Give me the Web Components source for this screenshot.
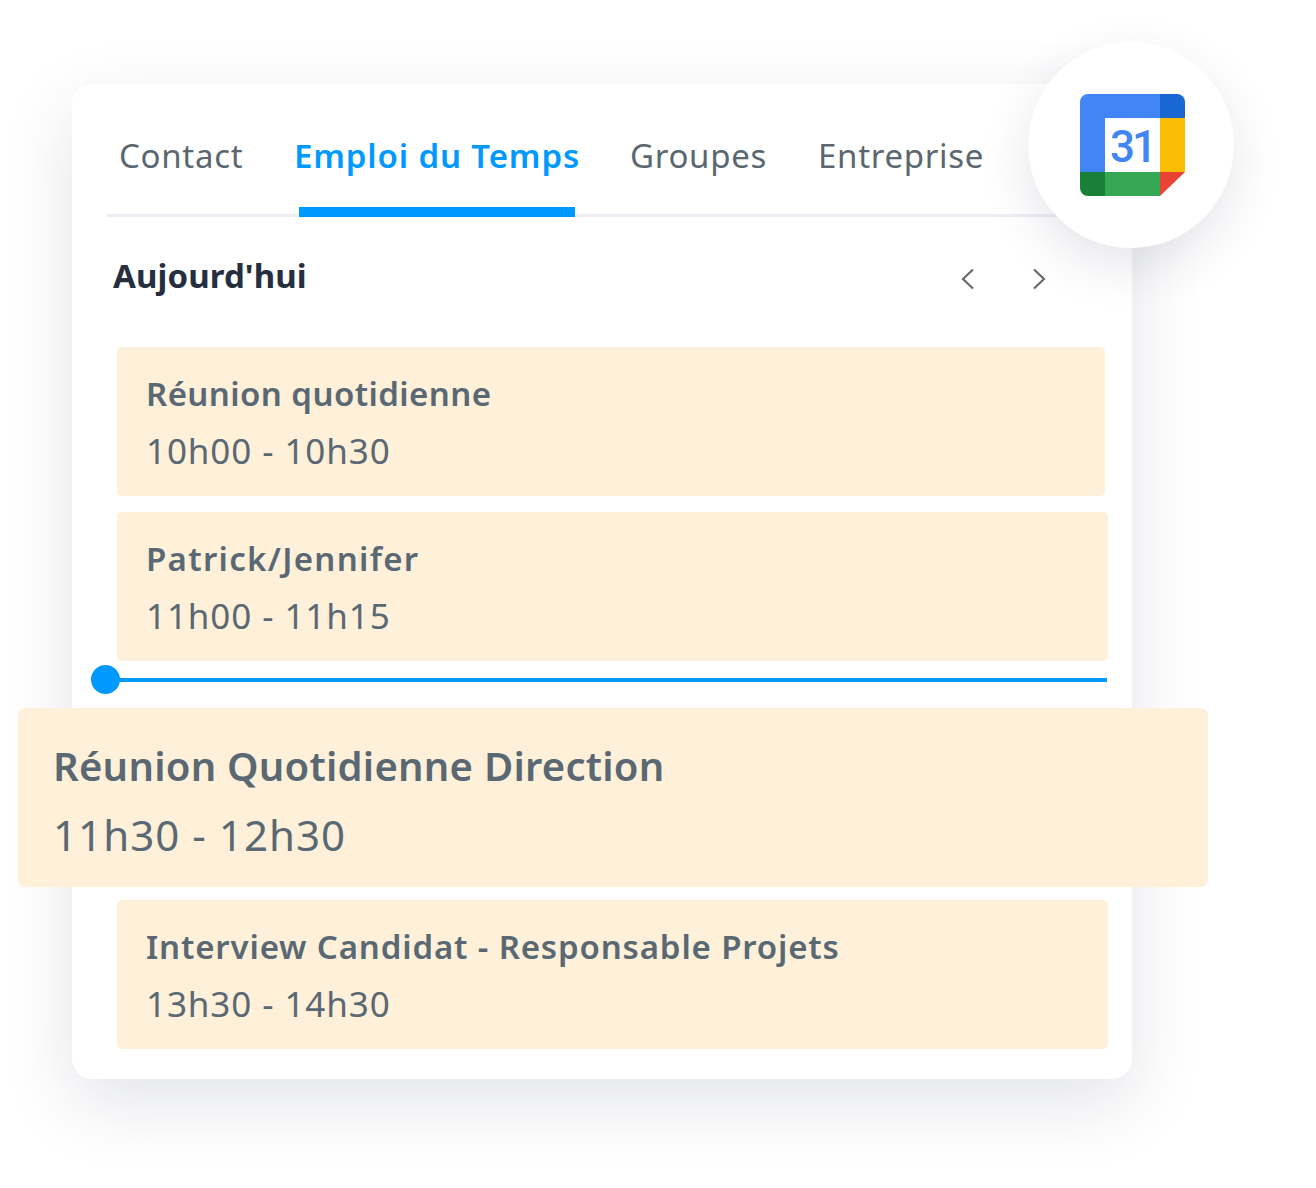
<!DOCTYPE html>
<html lang="fr">
<head>
<meta charset="utf-8">
<title>Emploi du Temps</title>
<style>
  html, body { margin: 0; background: #fff; }
  body { font-family: "Noto Sans", "Liberation Sans", sans-serif; height: 1188px; overflow: hidden; }
</style>
</head>
<body>
<schedule-panel>
  <tab-bar>
    <tab-item style="--w:124px;--gap:51px">Contact</tab-item>
    <tab-item active style="--w:285px;--gap:51px">Emploi du Temps</tab-item>
    <tab-item style="--w:135px;--gap:53px">Groupes</tab-item>
    <tab-item style="--w:165px;--gap:0px">Entreprise</tab-item>
  </tab-bar>
  <day-header>Aujourd'hui</day-header>
  <event-card style="--right:27px">
    <span slot="title" style="letter-spacing:.42px">Réunion quotidienne</span>
    <span slot="time">10h00 - 10h30</span>
  </event-card>
  <event-card style="--top:16px">
    <span slot="title" style="letter-spacing:1.3px">Patrick/Jennifer</span>
    <span slot="time">11h00 - 11h15</span>
  </event-card>
  <now-line></now-line>
  <event-card big>
    <span slot="title" style="letter-spacing:.25px">Réunion Quotidienne Direction</span>
    <span slot="time">11h30 - 12h30</span>
  </event-card>
  <event-card style="--top:13px">
    <span slot="title" style="letter-spacing:.85px">Interview Candidat - Responsable Projets</span>
    <span slot="time">13h30 - 14h30</span>
  </event-card>
  <gcal-badge></gcal-badge>
</schedule-panel>

<script>
class SchedulePanel extends HTMLElement {
  constructor() {
    super();
    this.attachShadow({mode: 'open'});
    this.shadowRoot.innerHTML = `
      <style>
        :host {
          display: block;
          position: relative;
          box-sizing: border-box;
          width: 1060px;
          height: 995px;
          margin: 84px 0 0 72px;
          padding-top: 37px;
          background: #fff;
          border-radius: 20px;
          box-shadow: 0 24px 70px rgba(40, 50, 80, .13);
        }
      </style>
      <slot></slot>
    `;
  }
}

class TabBar extends HTMLElement {
  constructor() {
    super();
    this.attachShadow({mode: 'open'});
    this.shadowRoot.innerHTML = `
      <style>
        :host {
          display: flex;
          box-sizing: border-box;
          height: 96px;
          margin-left: 35px;
          padding-left: 12px;
          border-bottom: 3px solid #eeeef5;
        }
      </style>
      <slot></slot>
    `;
  }
}

class TabItem extends HTMLElement {
  constructor() {
    super();
    this.attachShadow({mode: 'open'});
    this.shadowRoot.innerHTML = `
      <style>
        :host {
          display: block;
          position: relative;
          width: var(--w);
          margin-right: var(--gap);
          font-size: 33px;
          line-height: 69px;
          letter-spacing: .7px;
          white-space: nowrap;
          color: #5b6770;
        }
        :host([active]) {
          color: #0099ff;
          font-weight: 600;
          letter-spacing: .87px;
        }
        :host([active])::after {
          content: "";
          position: absolute;
          left: 5px;
          width: 276px;
          bottom: -3px;
          height: 10px;
          background: #0099ff;
        }
      </style>
      <slot></slot>
    `;
  }
}

class DayHeader extends HTMLElement {
  constructor() {
    super();
    this.attachShadow({mode: 'open'});
    this.shadowRoot.innerHTML = `
      <style>
        :host {
          display: flex;
          align-items: center;
          justify-content: space-between;
          box-sizing: border-box;
          height: 130px;
          margin-left: 41px;
          padding: 0 82px 14px 0;
          font-size: 33px;
          font-weight: 700;
          letter-spacing: .1px;
          color: #262f40;
        }
        .nav { display: flex; gap: 49px; padding-top: 8px; }
        svg { display: block; }
      </style>
      <span><slot></slot></span>
      <div class="nav">
        <svg width="22" height="24" viewBox="0 0 22 24" fill="none" stroke="#666a70" stroke-width="2.2"><path d="M16 2.5 6 12l10 9.5"/></svg>
        <svg width="22" height="24" viewBox="0 0 22 24" fill="none" stroke="#666a70" stroke-width="2.2"><path d="M6 2.5 16 12 6 21.5"/></svg>
      </div>
    `;
  }
}

class EventCard extends HTMLElement {
  constructor() {
    super();
    this.attachShadow({mode: 'open'});
    this.shadowRoot.innerHTML = `
      <style>
        :host {
          display: block;
          box-sizing: border-box;
          height: 149px;
          margin: var(--top, 0) var(--right, 24px) 0 45px;
          padding: 26px 29px 0;
          background: #fff0d9;
          border-radius: 5px;
          color: #5a6873;
          font-size: 33px;
        }
        :host([big]) {
          position: relative;
          height: 179px;
          margin: 26px -76px 0 -54px;
          padding: 30px 35px 0;
          border-radius: 8px;
          font-size: 40px;
        }
        .title { display: block; font-weight: 600; line-height: 42px; white-space: nowrap; }
        .time { display: block; margin-top: 15px; font-size: 35px; letter-spacing: .9px; line-height: 42px; white-space: nowrap; }
        :host([big]) .title { line-height: 56px; }
        :host([big]) .time { margin-top: 13px; font-size: 42px; letter-spacing: 1.05px; line-height: 56px; }
      </style>
      <slot class="title" name="title"></slot>
      <slot class="time" name="time"></slot>
    `;
  }
}

class NowLine extends HTMLElement {
  constructor() {
    super();
    this.attachShadow({mode: 'open'});
    this.shadowRoot.innerHTML = `
      <style>
        :host {
          display: block;
          position: relative;
          height: 4px;
          margin: 17px 25px 0 33px;
          background: #0099ff;
        }
        :host::before {
          content: "";
          position: absolute;
          left: -14px;
          top: -13px;
          width: 29px;
          height: 29px;
          border-radius: 50%;
          background: #0099ff;
        }
      </style>
    `;
  }
}

class GcalBadge extends HTMLElement {
  constructor() {
    super();
    this.attachShadow({mode: 'open'});
    this.shadowRoot.innerHTML = `
      <style>
        :host {
          position: absolute;
          left: 956px;
          top: -42px;
          width: 206px;
          height: 206px;
          border-radius: 50%;
          background: #fff;
          box-shadow: 0 18px 50px rgba(40, 50, 80, .12);
          display: flex;
          align-items: center;
          justify-content: center;
        }
        svg { display: block; margin: -1px 0 0 3px; }
        text { font-family: "Roboto", sans-serif; font-weight: 500; font-size: 44px; letter-spacing: -3px; fill: #4285f4; }
      </style>
      <svg width="105" height="102" viewBox="0 0 105 102">
        <rect x="25" y="24" width="55" height="54" fill="#fff"/>
        <path d="M80 0H8a8 8 0 0 0-8 8v70h25V24h55z" fill="#4285f4"/>
        <path d="M80 0h17a8 8 0 0 1 8 8v16H80z" fill="#1967d2"/>
        <rect x="80" y="24" width="25" height="54" fill="#fbbc04"/>
        <path d="M25 78h55v24H25z" fill="#34a853"/>
        <path d="M0 78v16a8 8 0 0 0 8 8h17V78z" fill="#188038"/>
        <path d="M80 78h25l-25 24z" fill="#ea4335"/>
        <text x="52" y="68" text-anchor="middle">31</text>
      </svg>
    `;
  }
}

customElements.define('schedule-panel', SchedulePanel);
customElements.define('tab-bar', TabBar);
customElements.define('tab-item', TabItem);
customElements.define('day-header', DayHeader);
customElements.define('event-card', EventCard);
customElements.define('now-line', NowLine);
customElements.define('gcal-badge', GcalBadge);
</script>
</body>
</html>
